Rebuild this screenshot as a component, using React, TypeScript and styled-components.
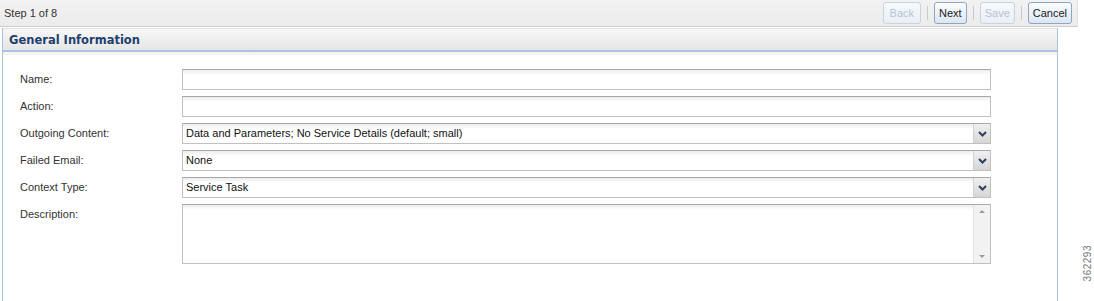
import React from "react";
import styled, { createGlobalStyle } from "styled-components";

const Global = createGlobalStyle`
  html, body { margin: 0; padding: 0; background: #ffffff; }
  body { font-family: "Liberation Sans", Arial, sans-serif; }
`;

const Page = styled.div`
  position: relative;
  width: 1094px;
  height: 301px;
  overflow: hidden;
  background: #fff;
`;

const Toolbar = styled.div`
  box-sizing: border-box;
  width: 1078px;
  height: 27px;
  display: flex;
  align-items: center;
  justify-content: space-between;
  padding: 0 5px 0 4px;
  background: linear-gradient(#f2f2f2, #ececec);
  border-bottom: 1px solid #cdcdcd;
  border-right: 1px solid #e2e2e2;
`;

const StepText = styled.span`
  font-size: 11px;
  color: #333;
`;

const Buttons = styled.div`
  display: flex;
  align-items: center;
  gap: 6px;
`;

const Btn = styled.button<{ $disabled?: boolean }>`
  box-sizing: border-box;
  height: 22px;
  padding: 0 4px;
  font-family: "Liberation Sans", Arial, sans-serif;
  font-size: 11px;
  border-radius: 3px;
  color: ${(p) => (p.$disabled ? "#b6c3d2" : "#1a1a1a")};
  border: 1px solid ${(p) => (p.$disabled ? "#c6d3e2" : "#8ea6c4")};
  background: ${(p) =>
    p.$disabled
      ? "linear-gradient(#f6f9fc, #e9eff6)"
      : "linear-gradient(#fbfdff, #dbe6f3)"};
  cursor: default;
`;

const BackBtn = styled(Btn)`
  padding: 0 6px;
`;

const Sep = styled.span`
  width: 1px;
  height: 14px;
  background: #c9c9c9;
`;

const Panel = styled.div`
  box-sizing: border-box;
  margin: 1px 0 0 2px;
  width: 1056px;
  height: 273px;
  display: flex;
  flex-direction: column;
  border-left: 1px solid #a8c2e0;
  border-right: 1px solid #a8c2e0;
`;

const Header = styled.div`
  box-sizing: border-box;
  height: 24px;
  display: flex;
  align-items: center;
  padding-left: 6px;
  background: linear-gradient(#f7f7f7, #e6e6e6);
  border-bottom: 2px solid #a9c4e4;
  border-top: 1px solid #e0e0e0;
  font-family: Tahoma, "DejaVu Sans", sans-serif;
  font-weight: bold;
  font-size: 11.5px;
  color: #21406e;
`;

const Body = styled.div`
  flex: 1;
  background: #fff;
  border-top: 3px solid #f3f3f3;
  padding: 14px 0 0 17px;
`;

const Form = styled.div`
  display: grid;
  grid-template-columns: 162px 809px;
  row-gap: 6px;
`;

const Label = styled.div`
  font-size: 11px;
  line-height: 21px;
  color: #333;
`;

const Field = styled.div<{ $tall?: boolean }>`
  box-sizing: border-box;
  height: ${(p) => (p.$tall ? "60px" : "21px")};
  display: flex;
  align-items: stretch;
  border: 1px solid #c0c0c0;
  border-top-color: #a8a8a8;
  background: linear-gradient(#ececec 0px, #ffffff 5px, #ffffff);
`;

const Value = styled.div`
  flex: 1;
  font-size: 11px;
  line-height: 18px;
  padding-left: 3px;
  color: #111;
`;

const ArrowBtn = styled.div`
  width: 16px;
  display: flex;
  align-items: center;
  justify-content: center;
  border-left: 1px solid #d0d0d0;
  background: linear-gradient(#f0f0f0, #d6d6d6);
`;

const ScrollBar = styled.div`
  width: 16px;
  display: flex;
  flex-direction: column;
  justify-content: space-between;
  align-items: center;
  padding: 5px 0;
  border-left: 1px solid #e2e2e2;
  background: #f2f2f2;
`;

const Tri = styled.span<{ $up?: boolean }>`
  width: 0;
  height: 0;
  border-left: 3px solid transparent;
  border-right: 3px solid transparent;
  ${(p) =>
    p.$up ? "border-bottom: 3px solid #9a9a9a;" : "border-top: 3px solid #9a9a9a;"}
`;

const FigId = styled.div`
  position: absolute;
  left: 1082px;
  top: 245px;
  writing-mode: vertical-rl;
  transform: rotate(180deg);
  font-size: 10px;
  letter-spacing: 0.5px;
  color: #777;
`;

const Chevron = () => (
  <svg width="9" height="6" viewBox="0 0 9 6">
    <path d="M1 1 L4.5 4.5 L8 1" fill="none" stroke="#2f3f5f" strokeWidth="2" />
  </svg>
);

const Select: React.FC<{ value: string }> = ({ value }) => (
  <Field>
    <Value>{value}</Value>
    <ArrowBtn>
      <Chevron />
    </ArrowBtn>
  </Field>
);

export default function App() {
  return (
    <Page>
      <Global />
      <Toolbar>
        <StepText>Step 1 of 8</StepText>
        <Buttons>
          <BackBtn $disabled>Back</BackBtn>
          <Sep />
          <Btn>Next</Btn>
          <Sep />
          <Btn $disabled>Save</Btn>
          <Sep />
          <Btn>Cancel</Btn>
        </Buttons>
      </Toolbar>
      <Panel>
        <Header>General Information</Header>
        <Body>
          <Form>
            <Label>Name:</Label>
            <Field />
            <Label>Action:</Label>
            <Field />
            <Label>Outgoing Content:</Label>
            <Select value="Data and Parameters; No Service Details (default; small)" />
            <Label>Failed Email:</Label>
            <Select value="None" />
            <Label>Context Type:</Label>
            <Select value="Service Task" />
            <Label>Description:</Label>
            <Field $tall>
              <Value />
              <ScrollBar>
                <Tri $up />
                <Tri />
              </ScrollBar>
            </Field>
          </Form>
        </Body>
      </Panel>
      <FigId>362293</FigId>
    </Page>
  );
}
